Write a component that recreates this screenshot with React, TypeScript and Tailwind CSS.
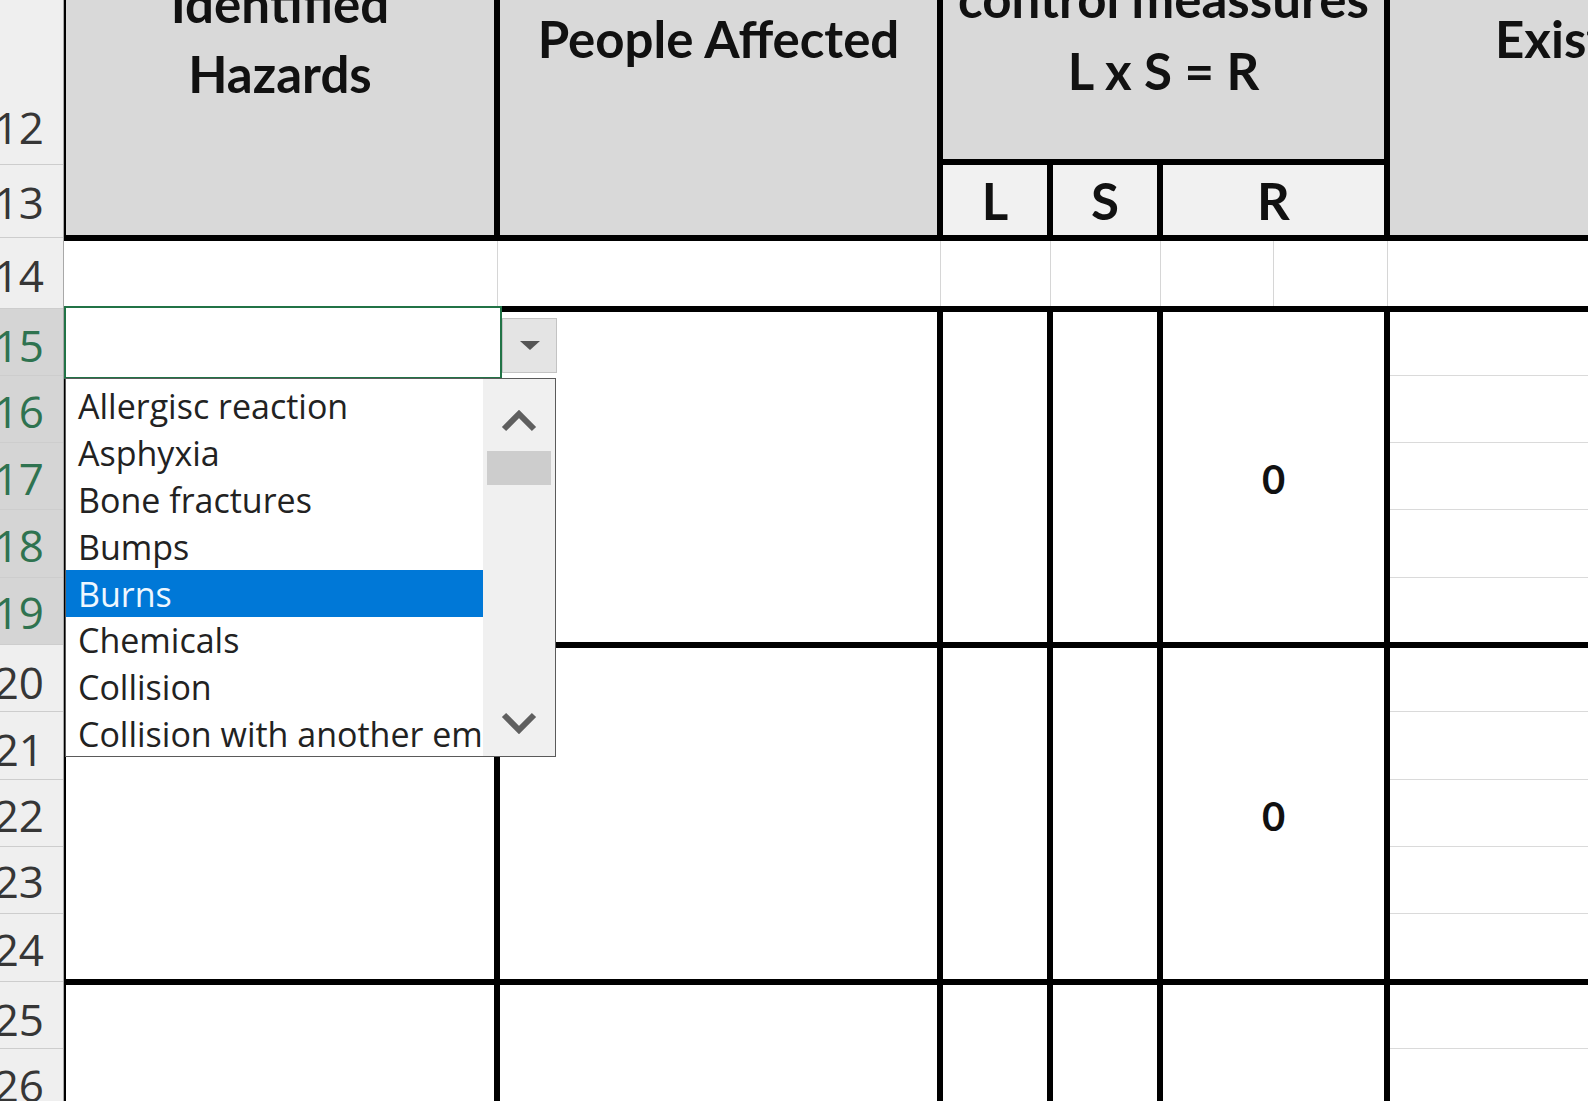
const ROW_HEADS = [
  { n: 12, cls: 'h-[165px] items-end pb-[15px]' },
  { n: 13, cls: 'h-[73px] items-center pt-[2px]' },
  { n: 14, cls: 'h-[71px] items-center pt-[4px]' },
  { n: 15, cls: 'h-[67px] items-center pt-[6px]', sel: true },
  { n: 16, cls: 'h-[67px] items-center pt-[4px]', sel: true },
  { n: 17, cls: 'h-[67px] items-center pt-[4px]', sel: true },
  { n: 18, cls: 'h-[68px] items-center pt-[3px]', sel: true },
  { n: 19, cls: 'h-[67px] items-center pt-[2px]', sel: true },
  { n: 20, cls: 'h-[67px] items-center pt-[8px]' },
  { n: 21, cls: 'h-[68px] items-center pt-[6px]' },
  { n: 22, cls: 'h-[67px] items-center pt-[3px]' },
  { n: 23, cls: 'h-[67px] items-center pt-[2px]' },
  { n: 24, cls: 'h-[68px] items-center pt-[2px]' },
  { n: 25, cls: 'h-[67px] items-center pt-[8px]' },
  { n: 26, cls: 'h-[67px] items-center pt-[6px]' },
];

const HAZARDS = [
  'Allergisc reaction',
  'Asphyxia',
  'Bone fractures',
  'Bumps',
  'Burns',
  'Chemicals',
  'Collision',
  'Collision with another employee',
];

function RowHeader() {
  return (
    <div className="w-[64px] shrink-0 border-r border-[#a8a8a8] bg-[#efefef] flex flex-col font-['Open_Sans',sans-serif] text-[44px] leading-[44px]">
      {ROW_HEADS.map((r) => (
        <div
          key={r.n}
          className={`${r.cls} shrink-0 flex justify-end pr-[19px] overflow-hidden border-b border-[#cdcdcd] ${
            r.sel ? 'bg-[#d5d5d5] text-[#2f7350]' : 'text-[#363636]'
          }`}
        >
          <span className="whitespace-nowrap">{r.n}</span>
        </div>
      ))}
    </div>
  );
}

// merged block of rows 15-19, 20-24, 25-..
function Block({ band, exist, zero }: { band: string; exist: string[]; zero?: boolean }) {
  return (
    <div className={`${band} shrink-0 flex`}>
      <div className="w-[436px] shrink-0 border-l-2 border-r-[6px] border-black" />
      <div className="w-[443px] shrink-0 border-r-[6px] border-black" />
      <div className="w-[110px] shrink-0 border-r-[6px] border-black" />
      <div className="w-[110px] shrink-0 border-r-[6px] border-black" />
      <div className="w-[227px] shrink-0 border-r-[6px] border-black flex items-center justify-center pt-[4px] text-[40px] leading-none font-bold text-[#111]">
        {zero ? '0' : ''}
      </div>
      <div className="flex-1 flex flex-col">
        {exist.map((h, i) => (
          <div key={i} className={`${h} shrink-0 border-b border-[#dadada]`} />
        ))}
        <div className="flex-1" />
      </div>
    </div>
  );
}

function HeaderBand() {
  return (
    <div className="h-[241px] shrink-0 flex border-b-[6px] border-black text-[#111] text-[51px] font-bold">
      <div className="w-[436px] shrink-0 border-l-2 border-r-[6px] border-black bg-[#d9d9d9] overflow-hidden">
        <p className="mt-[-31px] text-center leading-[70px]">
          Identified
          <br />
          Hazards
        </p>
      </div>
      <div className="w-[443px] shrink-0 border-r-[6px] border-black bg-[#d9d9d9] overflow-hidden">
        <p className="mt-[4px] text-center leading-[70px]">People Affected</p>
      </div>
      <div className="w-[447px] shrink-0 border-r-[6px] border-black flex flex-col">
        <div className="h-[165px] shrink-0 border-b-[6px] border-black bg-[#d9d9d9] overflow-hidden">
          <p className="mt-[-37px] text-center leading-[72px] whitespace-nowrap">
            control meassures
            <br />L x S = R
          </p>
        </div>
        <div className="flex-1 min-h-0 flex bg-[#f1f1f1] leading-none">
          <div className="w-[110px] shrink-0 border-r-[6px] border-black flex items-center justify-center">L</div>
          <div className="w-[110px] shrink-0 border-r-[6px] border-black flex items-center justify-center">S</div>
          <div className="flex-1 flex items-center justify-center">R</div>
        </div>
      </div>
      <div className="flex-1 bg-[#d9d9d9] overflow-hidden">
        <p className="mt-[4px] pl-[105px] leading-[70px] whitespace-nowrap">Existing Controls</p>
      </div>
    </div>
  );
}

function SpacerRow() {
  return (
    <div className="h-[71px] shrink-0 flex border-b-[6px] border-black">
      <div className="w-[434px] shrink-0 border-r border-[#d6d6d6]" />
      <div className="w-[443px] shrink-0 border-r border-[#d6d6d6]" />
      <div className="w-[110px] shrink-0 border-r border-[#d6d6d6]" />
      <div className="w-[110px] shrink-0 border-r border-[#d6d6d6]" />
      <div className="w-[113px] shrink-0 border-r border-[#d6d6d6]" />
      <div className="w-[114px] shrink-0 border-r border-[#d6d6d6]" />
      <div className="flex-1" />
    </div>
  );
}

function Chevron({ up }: { up?: boolean }) {
  return (
    <svg width="36" height="22" viewBox="0 0 36 22" className="block">
      <polyline
        points={up ? '3,19 18,4 33,19' : '3,3 18,18 33,3'}
        fill="none"
        stroke="#5f5f5f"
        strokeWidth="6"
        strokeLinejoin="miter"
      />
    </svg>
  );
}

function DropDown() {
  return (
    <>
      {/* selected cell */}
      <div className="absolute left-[64px] top-[306px] w-[438px] h-[73px] border-2 border-[#217346] bg-white" />
      {/* validation arrow */}
      <div className="absolute left-[502px] top-[318px] w-[55px] h-[55px] bg-[#e4e4e4] border border-[#c3c3c3] flex items-center justify-center">
        <svg width="20" height="10" viewBox="0 0 20 10">
          <polygon points="0,0 20,0 10,9" fill="#555" />
        </svg>
      </div>
      {/* list */}
      <div className="absolute left-[65px] top-[378px] w-[491px] h-[379px] bg-white border border-[#5a5a5a] flex font-['Open_Sans',sans-serif] text-[34px] leading-none text-[#222]">
        <div className="w-[417px] shrink-0 pt-[4px] overflow-hidden">
          {HAZARDS.map((h) => (
            <div
              key={h}
              className={`h-[46.8px] flex items-center pl-[12px] whitespace-nowrap ${
                h === 'Burns' ? 'bg-[#0078d7] text-[#eef7ff]' : ''
              }`}
            >
              {h}
            </div>
          ))}
        </div>
        <div className="flex-1 bg-[#f0f0f0] flex flex-col items-center pt-[31px] px-[4px]">
          <Chevron up />
          <div className="mt-[19px] w-full h-[34px] bg-[#cdcdcd]" />
          <div className="flex-1" />
          <div className="mb-[22px]">
            <Chevron />
          </div>
        </div>
      </div>
    </>
  );
}

export default function App() {
  return (
    <div className="w-[1588px] h-[1107px] bg-white overflow-hidden font-['Lato',sans-serif]">
      <div className="relative h-[1101px] overflow-hidden flex">
        <RowHeader />
        <div className="flex-1 flex flex-col">
          <HeaderBand />
          <SpacerRow />
          <Block
            band="h-[336px] border-b-[6px] border-black"
            exist={['h-[64px]', 'h-[67px]', 'h-[67px]', 'h-[68px]']}
            zero
          />
          <Block
            band="h-[337px] border-b-[6px] border-black"
            exist={['h-[64px]', 'h-[68px]', 'h-[67px]', 'h-[67px]']}
            zero
          />
          <Block band="h-[140px]" exist={['h-[64px]', 'h-[67px]']} />
        </div>
        <DropDown />
      </div>
    </div>
  );
}
